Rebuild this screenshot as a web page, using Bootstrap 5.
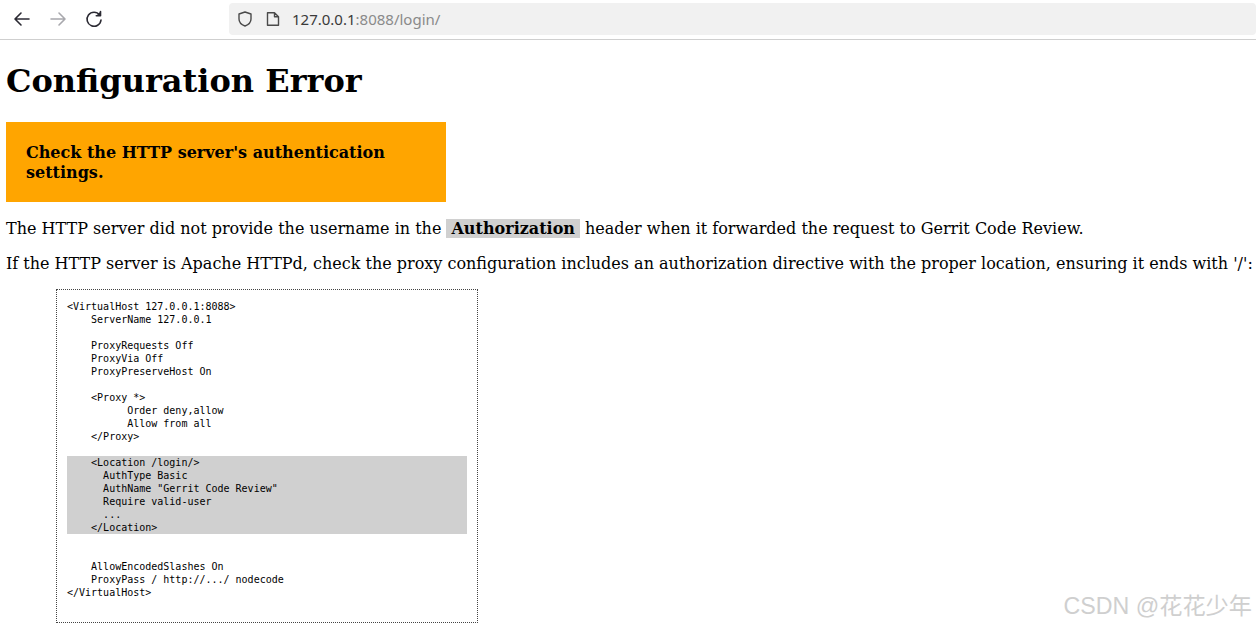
<!DOCTYPE html>
<html lang="en">
<head>
<meta charset="utf-8">
<title>Configuration Error</title>
<link href="https://cdn.jsdelivr.net/npm/bootstrap@5.3.0/dist/css/bootstrap.min.css" rel="stylesheet">
<style>
html,body{height:627px;overflow:hidden}
body{background:#fff;color:#000;font-family:"DejaVu Serif",serif;font-size:16px;line-height:normal;position:relative}
.chrome{height:40px;border-bottom:1px solid #cfcfcf;padding-left:12px}
.tbtn{width:20px;height:20px;display:block;fill:none;stroke:#2b2a33;stroke-width:1.6;stroke-linecap:round;stroke-linejoin:round}
.tbtn-off{stroke:#a8a8ad}
.navs{gap:16px;margin-top:-2px}
.urlbar{margin-left:125px;height:32px;background:#f1f1f1;border-radius:4px;padding-left:8px;font-family:"Noto Sans",sans-serif;font-size:15px;color:#8a8a8a;margin-top:-1px}
.urlbar b{font-weight:400;color:#3a3a3a}
.urlbar svg{display:block;flex:none;fill:none;stroke:#4a4a4a;stroke-width:1.4;stroke-linejoin:round}
.ic-shield{width:16px;height:16px}
.ic-doc{width:14px;height:14px;margin-left:13px}
.url-text{margin-left:12px}
.pagebody{padding:0 6px}
.errtitle{font-size:32px;font-weight:700;margin:22px 0 22px;line-height:38px;font-family:"DejaVu Serif",serif}
.errbox{width:440px;height:80px;background:orange;padding:21px 20px 19px;font-weight:700;font-size:16px;line-height:20px;margin-bottom:17px}
.copy{margin:0 0 16px;line-height:19px;white-space:nowrap}
.copy strong{background:#d0d0d0;padding:0 5px}
.conf{margin:0 0 0 50px;width:422px;height:334px;border:1px dotted #444;padding:10px;font-family:"DejaVu Sans Mono",monospace;font-size:10px;line-height:13px;overflow:hidden;color:#000}
.conf span{display:block;background:#d0d0d0}
.stamp{position:absolute;right:4px;bottom:7px;font-family:"Liberation Sans","Noto Sans CJK SC",sans-serif;font-size:23.2px;line-height:28px;color:#cfcfcf}
</style>
</head>
<body>
<div class="chrome d-flex align-items-center">
  <div class="d-flex navs align-items-center">
    <svg class="tbtn" viewBox="0 0 20 20"><path d="M17 10H3.500M9 4l-6 6 6 6"/></svg>
    <svg class="tbtn tbtn-off" viewBox="0 0 20 20"><path d="M3 10h13.500M11 4l6 6-6 6"/></svg>
    <svg class="tbtn" viewBox="0 0 20 20"><path d="M15.600 6A7 7 0 1 0 17 11"/><path d="M16.500 2.500v4.200h-4.200" fill="#2b2a33"/></svg>
  </div>
  <div class="urlbar flex-grow-1 d-flex align-items-center">
    <svg class="ic-shield" viewBox="0 0 16 16"><path d="M8 1l6 2v5c0 3.400-2.600 5.800-6 7-3.400-1.200-6-3.600-6-7V3z"/></svg>
    <svg class="ic-doc" viewBox="0 0 14 14"><path d="M1.500.7h7l4 4v8.600h-11zM8.500.7v4h4"/></svg>
    <span class="url-text"><b>127.0.0.1</b>:8088/login/</span>
  </div>
</div>
<div class="pagebody">
  <h1 class="errtitle">Configuration Error</h1>
  <div class="errbox">Check the HTTP server's authentication settings.</div>
  <p class="copy">The HTTP server did not provide the username in the <strong>Authorization</strong> header when it forwarded the request to Gerrit Code Review.</p>
  <p class="copy">If the HTTP server is Apache HTTPd, check the proxy configuration includes an authorization directive with the proper location, ensuring it ends with '/':</p>
  <pre class="conf">&lt;VirtualHost 127.0.0.1:8088&gt;
    ServerName 127.0.0.1

    ProxyRequests Off
    ProxyVia Off
    ProxyPreserveHost On

    &lt;Proxy *&gt;
          Order deny,allow
          Allow from all
    &lt;/Proxy&gt;

<span>    &lt;Location /login/&gt;
      AuthType Basic
      AuthName "Gerrit Code Review"
      Require valid-user
      ...
    &lt;/Location&gt;
</span>

    AllowEncodedSlashes On
    ProxyPass / http://.../ nodecode
&lt;/VirtualHost&gt;</pre>
</div>
<div class="stamp">CSDN @花花少年</div>
</body>
</html>
